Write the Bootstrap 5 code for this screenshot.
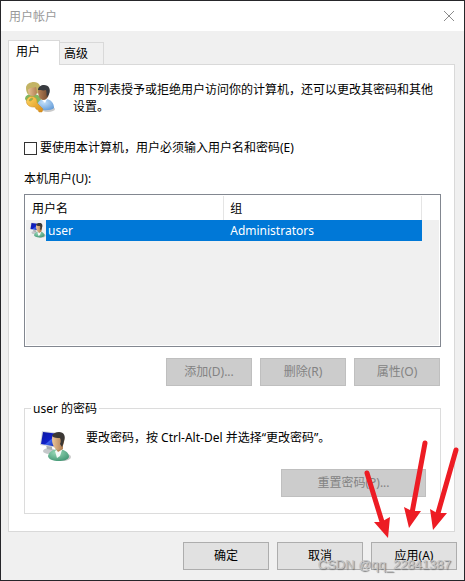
<!DOCTYPE html>
<html lang="zh-CN">
<head>
<meta charset="utf-8">
<meta name="viewport" content="width=device-width, initial-scale=1">
<title>用户帐户</title>
<link href="https://cdn.jsdelivr.net/npm/bootstrap@5.3.0/dist/css/bootstrap.min.css" rel="stylesheet">
<style>
body { font-family: "Noto Sans", "Noto Sans CJK SC", sans-serif; font-size: 12px; line-height: 17px; color: #000; background: #f0f0f0; }
.dialog { border: 1px solid #26262a; background: #f0f0f0; }
.titlebar { height: 30px; padding: 0 9px 0 8px; color: #999; }
.close-x { line-height: 0; }
.dialog-body { padding: 9px 9px 0 7px; }
.nav-tabs { --bs-nav-tabs-border-width: 0; border: 0; }
.nav-tabs .nav-link { border: 1px solid #d9d9d9; border-radius: 0; color: #000; background: #f0f0f0; margin: 0; line-height: 16px; padding: 3px 15px 2px 4px; border-left: 0; border-bottom: 0; }
.nav-tabs .nav-link.active { background: #fff; border: 1px solid #d9d9d9; border-bottom: 0; padding: 3px 19px 5px 7px; margin-bottom: -1px; position: relative; z-index: 1; color: #000; }
.panel { border: 1px solid #d9d9d9; padding: 16px 13px 17px 15px; }
.intro { gap: 17px; }
.tick { appearance: none; width: 13px; height: 13px; border: 1px solid #333; background: #fff; margin: 3px 3px 0 0; flex: none; }
.tick:checked { background: #0078d7; }
.check-row { margin-top: 24px; }
.list-label { margin-top: 14px; margin-bottom: 7px; }
.list-box { border: 1px solid #828790; background: #f0f0f0; height: 153px; padding: 1px; outline: 1px solid #fff; outline-offset: -2px; }
.user-table { table-layout: fixed; width: 100%; border-collapse: separate; border-spacing: 0; }
.user-table th { font-weight: 400; height: 24px; padding: 0 6px; background: #fff; border-right: 1px solid #e5e5e5; }
.user-table th:last-child { border-right: 0; }
.user-table td { height: 21px; line-height: 21px; padding: 0 6px; }
.col-data { width: 48%; }
.user-table .name-cell { padding: 0 0 0 4px; }
.row-icon { margin-top: 2px; }
.picked { background: #0078d7; color: #fff; }
.name-cell .picked { padding-left: 2px; }
.push { width: 86px; height: 28px; padding: 0; border: 1px solid #adadad; border-radius: 0; background: #e1e1e1; color: #000; font-size: 12px; line-height: 16px; }
.push:disabled { background: #ccc; border-color: #bfbfbf; color: #838383; opacity: 1; }
.push-wide { width: 145px; }
.list-actions { margin-top: 11px; padding-right: 1px; }
.group-frame { border: 1px solid #dcdcdc; margin-top: 14px; padding: 0 14px 16px 15px; }
.group-frame legend { float: none; width: auto; font-size: 12px; line-height: 17px; margin: 0 0 0 -9px; padding: 0 2px; }
.group-icon { margin: 13px 14px 0 0; }
.group-note { margin-top: 12px; }
.reset-row { margin-top: 7px; }
.dialog-foot { padding: 10px 7px; }
.marks { right: 0; bottom: 0; pointer-events: none; z-index: 3; }
.stamp { right: 13px; bottom: 7px; font: 13px/17px "Liberation Sans", sans-serif; color: #c4c4c4; text-shadow: 1px 1px 1px #777; pointer-events: none; z-index: 4; }
</style>
<script src="https://cdn.jsdelivr.net/npm/bootstrap@5.3.0/dist/js/bootstrap.bundle.min.js"></script>
</head>
<body>
<svg width="0" height="0" class="position-absolute" aria-hidden="true">
  <defs>
    <linearGradient id="screen" x1="0" y1="0" x2="1" y2="1"><stop offset="0" stop-color="#0b18a0"/><stop offset=".5" stop-color="#1020c8"/><stop offset=".55" stop-color="#3b62ee"/><stop offset="1" stop-color="#0a1690"/></linearGradient>
    <linearGradient id="skin" x1="0" y1="0" x2="1" y2="0"><stop offset="0" stop-color="#edc79b"/><stop offset="1" stop-color="#a87448"/></linearGradient>
    <linearGradient id="dark" x1="0" y1="0" x2="1" y2="0"><stop offset="0" stop-color="#b58055"/><stop offset="1" stop-color="#70472c"/></linearGradient>
    <radialGradient id="green" cx=".4" cy=".3" r=".8"><stop offset="0" stop-color="#9ad9b8"/><stop offset="1" stop-color="#3d9370"/></radialGradient>
    <radialGradient id="blue" cx=".4" cy=".3" r=".8"><stop offset="0" stop-color="#c3e0fa"/><stop offset="1" stop-color="#5f98d6"/></radialGradient>
    <linearGradient id="gold" x1="0" y1="0" x2="1" y2="1"><stop offset="0" stop-color="#ffd965"/><stop offset="1" stop-color="#d98a14"/></linearGradient>
    <symbol id="pc-user" viewBox="0 0 32 32">
      <ellipse cx="9" cy="21" rx="6" ry="3" fill="#c5c8ca"/>
      <path d="M6 15l6 1v4l-5-1z" fill="#a9adb0"/>
      <path d="M2 1l18 2-1 15L0 15z" fill="#d5d8dc"/>
      <path d="M3 2l16 2-1 13L1 14z" fill="url(#screen)"/>
      <ellipse cx="23" cy="27" rx="8" ry="4" fill="#777" opacity=".4"/>
      <path d="M8 26c1-4 4-6 9-7 7 0 12 3 12 8-1 3-6 4-10 4-6 0-11-2-11-5z" fill="url(#green)"/>
      <path d="M15 21l4-2 3 1-2 6-3 2z" fill="#f6faf8"/>
      <path d="M15 16l8-1v4l-5 3-2-3z" fill="#b98558"/>
      <path d="M12 9c0-5 3-6 7-6 5 0 6 4 5 9-1 5-3 8-6 8s-6-5-6-11z" fill="url(#skin)"/>
      <path d="M12 6c1-3 4-4 7-4 5 0 7 4 5 9-1 3-1 4-2 6l-2-3c1-2 1-4 0-6-3 0-6 0-8-2z" fill="#3b3835"/>
    </symbol>
    <symbol id="users-key" viewBox="0 0 32 32">
      <path d="M1 18c0-4 4-5 8-5 5 0 8 2 8 7-2 4-12 5-16-2z" fill="#81b75f"/>
      <path d="M3 8c0-5 3-6 6-6 5 0 7 4 5 8-1 3-3 5-5 5-4 0-6-3-6-7z" fill="url(#skin)"/>
      <path d="M2 7c0-4 4-6 8-6 5 0 7 4 6 8l-2 4c-2-2-1-4-2-7-3 1-6 0-8 3l1 5c-2-1-3-4-3-7z" fill="#c3b465"/>
      <ellipse cx="24" cy="28" rx="7" ry="3" fill="#777" opacity=".4"/>
      <path d="M13 27c0-6 3-9 8-9 6 0 9 4 9 9-3 3-14 3-17 0z" fill="url(#blue)"/>
      <path d="M17 18l3-1 3 1-2 4z" fill="#fff"/>
      <path d="M14 10c0-4 3-5 6-5 5 0 6 4 5 8-1 4-3 6-6 6s-5-4-5-9z" fill="url(#dark)"/>
      <path d="M14 9c0-3 3-5 6-5 5 0 7 4 5 9l-2 3c-1-3 0-4-1-7-3 1-5 0-8 0z" fill="#383b40"/>
      <path fill-rule="evenodd" d="M4 17c3-3 9-1 9 3 0 2 0 2 2 4l4 4-1 3h-3l-1-2-2-1-1-2c-7 1-11-5-7-9zm2 1c-2 2 0 3 2 1s0-3-2-1z" fill="url(#gold)" stroke="#c98a25" stroke-width=".5"/>
    </symbol>
  </defs>
</svg>
<main class="dialog position-relative min-vh-100 d-flex flex-column">
  <header class="titlebar bg-white d-flex align-items-center justify-content-between">
    <span>用户帐户</span>
    <button type="button" class="close-x btn p-0 border-0" aria-label="关闭">
      <svg width="12" height="12" viewBox="0 0 12 12"><path d="M1 1l10 10M11 1L1 11" stroke="#8b8b8b" fill="none"/></svg>
    </button>
  </header>
  <div class="dialog-body flex-grow-1 d-flex flex-column">
    <div class="nav nav-tabs align-items-end" role="tablist">
      <button type="button" class="nav-link active" role="tab" aria-selected="true" aria-controls="users">用户</button>
      <button type="button" class="nav-link" role="tab" aria-selected="false">高级</button>
    </div>
    <section class="panel bg-white flex-grow-1" id="users" role="tabpanel">
      <div class="intro d-flex">
        <svg class="flex-shrink-0" width="32" height="32" aria-hidden="true"><use href="#users-key"/></svg>
        <p class="mb-0">用下列表授予或拒绝用户访问你的计算机，还可以更改其密码和其他设置。</p>
      </div>
      <div class="check-row d-flex align-items-start">
        <input class="tick" type="checkbox" id="need">
        <label for="need">要使用本计算机，用户必须输入用户名和密码(E)</label>
      </div>
      <div class="list-label" id="listLabel">本机用户(U):</div>
      <div class="list-box">
        <table class="user-table" aria-labelledby="listLabel">
          <colgroup><col class="col-data"><col class="col-data"><col></colgroup>
          <thead><tr><th scope="col">用户名</th><th scope="col">组</th><th></th></tr></thead>
          <tbody><tr>
            <td class="name-cell"><div class="d-flex"><svg class="row-icon flex-shrink-0" width="16" height="16" aria-hidden="true"><use href="#pc-user"/></svg><span class="picked flex-grow-1">user</span></div></td>
            <td class="picked">Administrators</td><td></td>
          </tr></tbody>
        </table>
      </div>
      <div class="list-actions d-flex justify-content-end gap-2">
        <button type="button" class="push btn" disabled>添加(D)...</button>
        <button type="button" class="push btn" disabled>删除(R)</button>
        <button type="button" class="push btn" disabled>属性(O)</button>
      </div>
      <fieldset class="group-frame">
        <legend>user 的密码</legend>
        <div class="d-flex">
          <svg class="group-icon flex-shrink-0" width="32" height="32" aria-hidden="true"><use href="#pc-user"/></svg>
          <p class="group-note mb-0">要改密码，按 Ctrl-Alt-Del 并选择“更改密码”。</p>
        </div>
        <div class="reset-row d-flex justify-content-end">
          <button type="button" class="push push-wide btn" disabled>重置密码(P)...</button>
        </div>
      </fieldset>
    </section>
  </div>
  <footer class="dialog-foot d-flex justify-content-end gap-2">
    <button type="button" class="push btn">确定</button>
    <button type="button" class="push btn">取消</button>
    <button type="button" class="push btn">应用(A)</button>
  </footer>
  <svg class="marks position-absolute" width="110" height="146" viewBox="354 434 110 146" aria-hidden="true">
    <g stroke="#ed1c24" stroke-width="5" stroke-linecap="round"><path d="M367 473l16 52M425 443l-13 70M456 450l-18 63"/></g>
    <path fill="#ed1c24" d="M388 538l-14-16 7 0 9-5zM409 528l-5-21 8 4 9 0zM433 530l-3-21 7 4 10 0z"/>
  </svg>
  <span class="stamp position-absolute">CSDN @qq_22841387</span>
</main>
</body>
</html>
